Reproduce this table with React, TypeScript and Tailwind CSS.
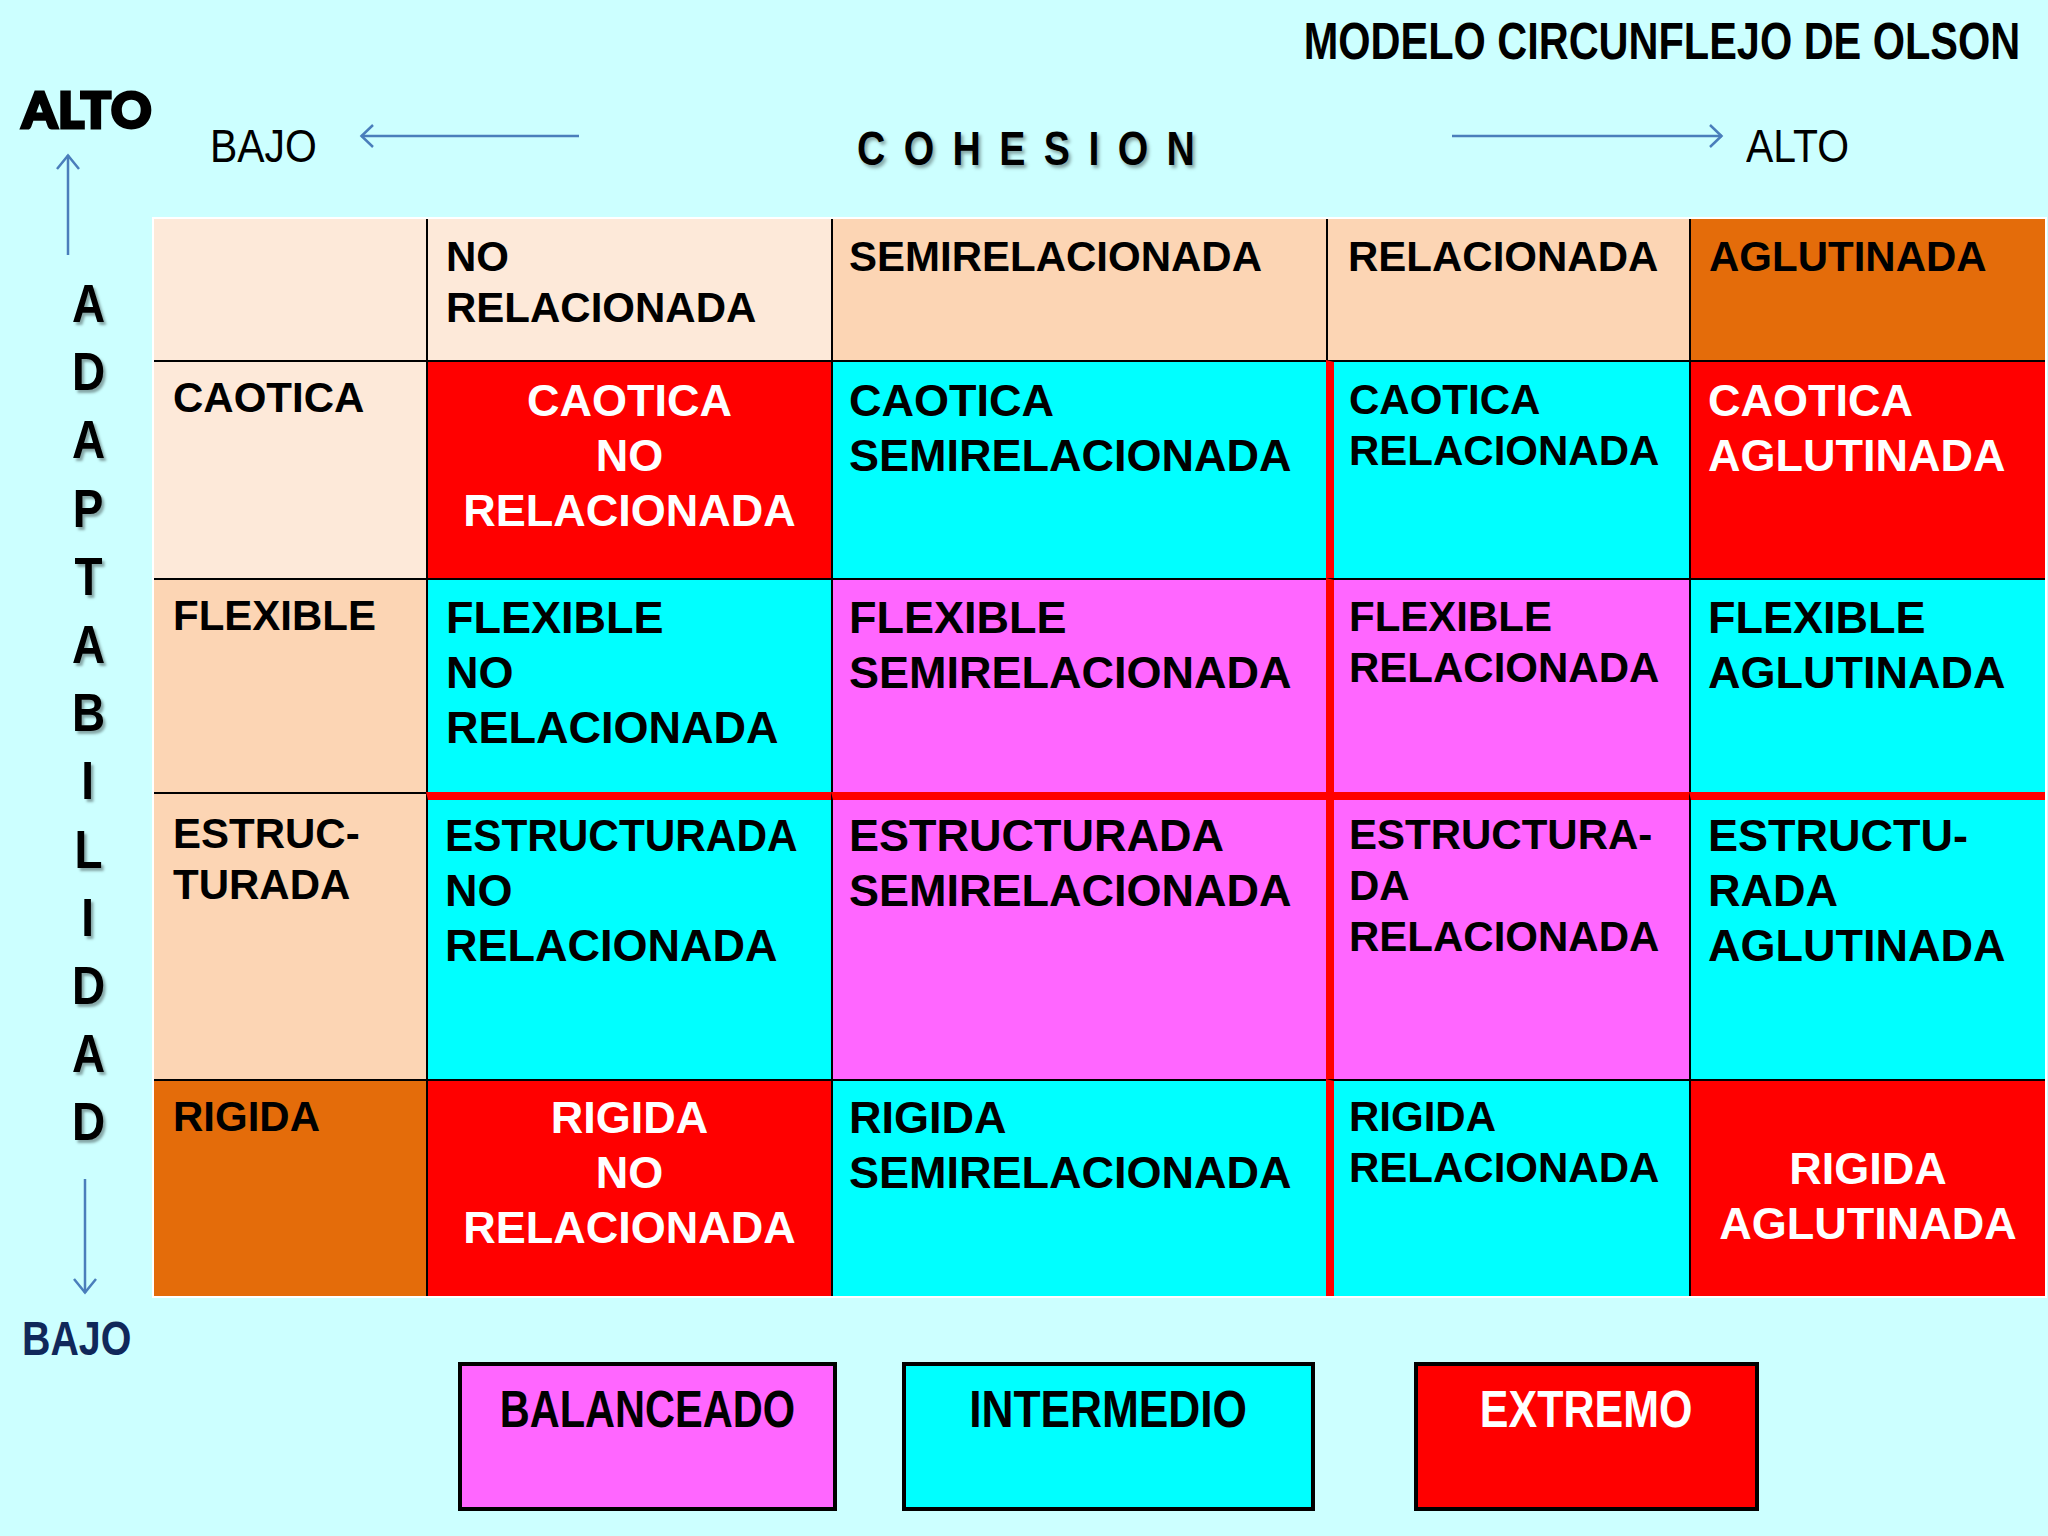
type Cell = {
  lines: string[]
  cls: string
}

const arial = "font-['Liberation_Sans',Arial,sans-serif] font-bold"

const big = 'text-[45px] leading-[55px]'
const small = 'text-[42px] leading-[51px]'

// borders: col 1..4 get a left rule, rows 1..4 a top rule; red rules split the quadrants
const rows: Cell[][] = [
  [
    { lines: [], cls: 'bg-[#fde9d9]' },
    { lines: ['NO', 'RELACIONADA'], cls: 'bg-[#fde9d9] border-l-2 border-l-black pt-[12px] pl-[18px] ' + small },
    { lines: ['SEMIRELACIONADA'], cls: 'bg-[#fcd5b4] border-l-2 border-l-black pt-[12px] pl-[16px] ' + small },
    { lines: ['RELACIONADA'], cls: 'bg-[#fcd5b4] border-l-2 border-l-black pt-[12px] pl-[20px] ' + small },
    { lines: ['AGLUTINADA'], cls: 'bg-[#e46c0a] border-l-2 border-l-black pt-[12px] pl-[18px] ' + small },
  ],
  [
    { lines: ['CAOTICA'], cls: 'bg-[#fde9d9] border-t-2 border-t-black pt-[10px] pl-[19px] ' + small },
    { lines: ['CAOTICA', 'NO', 'RELACIONADA'], cls: 'bg-[#ff0000] text-white text-center border-t-2 border-t-black border-l-2 border-l-black pt-[11px] ' + big },
    { lines: ['CAOTICA', 'SEMIRELACIONADA'], cls: 'bg-[#00ffff] border-t-2 border-t-black border-l-2 border-l-black pt-[11px] pl-[16px] ' + big },
    { lines: ['CAOTICA', 'RELACIONADA'], cls: 'bg-[#00ffff] border-t-2 border-t-black border-l-[8px] border-l-[#ff0000] pt-[12px] pl-[15px] ' + small },
    { lines: ['CAOTICA', 'AGLUTINADA'], cls: 'bg-[#ff0000] text-white border-t-2 border-t-black border-l-2 border-l-black pt-[11px] pl-[17px] ' + big },
  ],
  [
    { lines: ['FLEXIBLE'], cls: 'bg-[#fcd5b4] border-t-2 border-t-black pt-[10px] pl-[19px] ' + small },
    { lines: ['FLEXIBLE', 'NO', 'RELACIONADA'], cls: 'bg-[#00ffff] border-t-2 border-t-black border-l-2 border-l-black pt-[10px] pl-[18px] ' + big },
    { lines: ['FLEXIBLE', 'SEMIRELACIONADA'], cls: 'bg-[#ff66ff] border-t-2 border-t-black border-l-2 border-l-black pt-[10px] pl-[16px] ' + big },
    { lines: ['FLEXIBLE', 'RELACIONADA'], cls: 'bg-[#ff66ff] border-t-2 border-t-black border-l-[8px] border-l-[#ff0000] pt-[11px] pl-[15px] ' + small },
    { lines: ['FLEXIBLE', 'AGLUTINADA'], cls: 'bg-[#00ffff] border-t-2 border-t-black border-l-2 border-l-black pt-[10px] pl-[17px] ' + big },
  ],
  [
    { lines: ['ESTRUC-', 'TURADA'], cls: 'bg-[#fcd5b4] border-t-2 border-t-black pt-[14px] pl-[19px] ' + small },
    { lines: ['ESTRUCTURADA', 'NO', 'RELACIONADA'], cls: 'bg-[#00ffff] border-t-[8px] border-t-[#ff0000] border-l-2 border-l-black pt-[8px] pl-[17px] ' + big },
    { lines: ['ESTRUCTURADA', 'SEMIRELACIONADA'], cls: 'bg-[#ff66ff] border-t-[8px] border-t-[#ff0000] border-l-2 border-l-black pt-[8px] pl-[16px] ' + big },
    { lines: ['ESTRUCTURA-', 'DA', 'RELACIONADA'], cls: 'bg-[#ff66ff] border-t-[8px] border-t-[#ff0000] border-l-[8px] border-l-[#ff0000] pt-[9px] pl-[15px] ' + small },
    { lines: ['ESTRUCTU-', 'RADA', 'AGLUTINADA'], cls: 'bg-[#00ffff] border-t-[8px] border-t-[#ff0000] border-l-2 border-l-black pt-[8px] pl-[17px] ' + big },
  ],
  [
    { lines: ['RIGIDA'], cls: 'bg-[#e46c0a] border-t-2 border-t-black pt-[10px] pl-[19px] ' + small },
    { lines: ['RIGIDA', 'NO', 'RELACIONADA'], cls: 'bg-[#ff0000] text-white text-center border-t-2 border-t-black border-l-2 border-l-black pt-[9px] ' + big },
    { lines: ['RIGIDA', 'SEMIRELACIONADA'], cls: 'bg-[#00ffff] border-t-2 border-t-black border-l-2 border-l-black pt-[9px] pl-[16px] ' + big },
    { lines: ['RIGIDA', 'RELACIONADA'], cls: 'bg-[#00ffff] border-t-2 border-t-black border-l-[8px] border-l-[#ff0000] pt-[10px] pl-[15px] ' + small },
    { lines: ['RIGIDA', 'AGLUTINADA'], cls: 'bg-[#ff0000] text-white text-center border-t-2 border-t-black border-l-2 border-l-black pt-[60px] ' + big },
  ],
]

const vertical = 'ADAPTABILIDAD'.split('')

const ArrowH = ({ width, left }: { width: number; left: boolean }) => (
  <svg width={width} height={24} viewBox={`0 0 ${width} 24`} fill="none" stroke="#4a7ebb" strokeWidth={2.5}>
    <line x1={2} y1={12} x2={width - 2} y2={12} />
    {left ? (
      <polyline points="14,1 2.5,12 14,23" />
    ) : (
      <polyline points={`${width - 14},1 ${width - 2.5},12 ${width - 14},23`} />
    )}
  </svg>
)

const ArrowV = ({ height, up }: { height: number; up: boolean }) => (
  <svg width={24} height={height} viewBox={`0 0 24 ${height}`} fill="none" stroke="#4a7ebb" strokeWidth={2.5}>
    <line x1={12} y1={2} x2={12} y2={height - 2} />
    {up ? (
      <polyline points="1,16 12,2.5 23,16" />
    ) : (
      <polyline points={`1,${height - 16} 12,${height - 2.5} 23,${height - 16}`} />
    )}
  </svg>
)

const App = () => {
  return (
    <div className="flex h-[1536px] w-[2048px] overflow-hidden bg-[#ccffff] text-black font-['Liberation_Sans',Arial,sans-serif]">
      {/* vertical axis: adaptabilidad */}
      <div className="flex w-[152px] shrink-0 flex-col pt-[84px]">
        <div className="ml-[22px] font-['Lato',sans-serif] text-[50px] font-black leading-[50px] tracking-[1px] [-webkit-text-stroke:3px_black]">
          ALTO
        </div>
        <div className="mt-[19px] ml-[56px]">
          <ArrowV height={104} up />
        </div>
        <div className="mt-[12px] flex w-[176px] flex-col items-center text-[54px] font-bold leading-[68.2px] [text-shadow:3px_3px_3px_rgba(0,0,0,0.35)]">
          {vertical.map((ch, i) => (
            <div key={i} className="h-[68.2px] origin-center scale-x-[0.85]">
              {ch}
            </div>
          ))}
        </div>
        <div className="mt-[22px] ml-[73px]">
          <ArrowV height={118} up={false} />
        </div>
        <div className="mt-[20px] ml-[22px] text-[48px] font-bold leading-[48px] text-[#10285a]">
          <span className="inline-block origin-left scale-x-[0.82]">BAJO</span>
        </div>
      </div>

      <div className="flex flex-1 flex-col">
        <div className="pt-[16px] pr-[28px] text-right text-[51px] font-bold leading-[51px]">
          <span className="inline-block origin-right scale-x-[0.813]">MODELO CIRCUNFLEJO DE OLSON</span>
        </div>

        {/* cohesion axis */}
        <div className="flex h-[150px] items-start">
          <div className="ml-[58px] mt-[55px] w-[149px] text-[47px] leading-[47px]">
            <span className="inline-block origin-left scale-x-[0.87]">BAJO</span>
          </div>
          <div className="mt-[57px] w-[498px]">
            <ArrowH width={222} left />
          </div>
          <div className="mt-[57px] w-[593px] text-[49px] font-bold leading-[49px] [text-shadow:3px_3px_4px_rgba(0,0,0,0.35)]">
            <span className="inline-block origin-left scale-x-[0.8] tracking-[23px]">COHESION</span>
          </div>
          <div className="mt-[57px] w-[296px]">
            <ArrowH width={274} left={false} />
          </div>
          <div className="mt-[55px] text-[47px] leading-[47px]">
            <span className="inline-block origin-left scale-x-[0.87]">ALTO</span>
          </div>
        </div>

        <div className="w-fit border-2 border-white">
          <div className="grid grid-cols-[272px_405px_495px_363px_356px] grid-rows-[141px_218px_214px_287px_217px]">
            {rows.map((row, r) =>
              row.map((cell, c) => (
                <div key={`${r}-${c}`} className={`whitespace-nowrap ${arial} ${cell.cls}`}>
                  {cell.lines.map((line, i) =>
                    line === 'ESTRUCTURADA' && c === 1 ? (
                      <div key={i} className="origin-left scale-x-[0.94]">
                        {line}
                      </div>
                    ) : (
                      <div key={i}>{line}</div>
                    ),
                  )}
                </div>
              )),
            )}
          </div>
        </div>

        {/* legend */}
        <div className="mt-[64px] ml-[306px] flex text-[51px] font-bold leading-[51px]">
          <div className="h-[149px] w-[379px] border-4 border-black bg-[#ff66ff] pt-[18px] text-center">
            <span className="inline-block scale-x-[0.814]">BALANCEADO</span>
          </div>
          <div className="ml-[65px] h-[149px] w-[413px] border-4 border-black bg-[#00ffff] pt-[18px] text-center">
            <span className="inline-block scale-x-[0.868]">INTERMEDIO</span>
          </div>
          <div className="ml-[99px] h-[149px] w-[345px] border-4 border-black bg-[#ff0000] pt-[18px] text-center text-white">
            <span className="inline-block scale-x-[0.843]">EXTREMO</span>
          </div>
        </div>
      </div>
    </div>
  )
}

export default App
